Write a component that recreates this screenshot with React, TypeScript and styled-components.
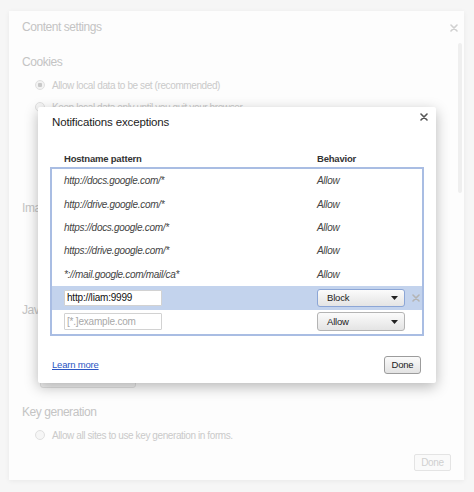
import React from "react"
import styled, { createGlobalStyle } from "styled-components"

const GlobalStyle = createGlobalStyle`
    html, body {
        margin: 0;
        padding: 0;
        background: #f6f6f6;
    }
    body {
        font-family: "Liberation Sans", Arial, sans-serif;
    }
`

// rows with no label sit behind the dialog and only keep the spacing
type Option = { label?: string, checked?: boolean }
type Section = { title: string, options: Option[], button?: boolean }

const sections: Section[] = [
    {
        title: "Cookies",
        options: [
            { label: "Allow local data to be set (recommended)", checked: true },
            { label: "Keep local data only until you quit your browser" },
            {},
            {},
        ],
        button: true,
    },
    { title: "Images", options: [{}, {}], button: true },
    { title: "JavaScript", options: [{}, {}], button: true },
    {
        title: "Key generation",
        options: [{ label: "Allow all sites to use key generation in forms." }],
    },
]

const exceptions = [
    "http://docs.google.com/*",
    "http://drive.google.com/*",
    "https://docs.google.com/*",
    "https://drive.google.com/*",
    "*://mail.google.com/mail/ca*",
]

const Cross = ({ size, color }: { size: number, color: string }) => (
    <svg width={size} height={size} viewBox="0 0 8 8">
        <path d="M1 1 L7 7 M7 1 L1 7" stroke={color} strokeWidth="1.6" strokeLinecap="round" />
    </svg>
)

const Caret = () => (
    <svg width="7" height="4" viewBox="0 0 7 4">
        <path d="M0 0 H7 L3.5 4 Z" fill="#222" />
    </svg>
)

const App = () => {
    return (
        <>
            <GlobalStyle />
            <Page>
                <Panel>
                    <PanelMain>
                        <TitleRow>
                            <BgTitle>Content settings</BgTitle>
                            <BgClose><Cross size={8} color="#d0d0d0" /></BgClose>
                        </TitleRow>
                        {sections.map((s, i) => (
                            <BgSection key={i} $first={i === 0}>
                                <BgHeading>{s.title}</BgHeading>
                                {s.options.map((o, j) => (
                                    <OptionRow key={j}>
                                        {o.label && (
                                            <>
                                                <Radio $checked={!!o.checked} />
                                                <OptionText>{o.label}</OptionText>
                                            </>
                                        )}
                                    </OptionRow>
                                ))}
                                {s.button && (
                                    <BgButtons>
                                        <BgButton />
                                    </BgButtons>
                                )}
                            </BgSection>
                        ))}
                        <BgFooter>
                            <BgDone>Done</BgDone>
                        </BgFooter>
                    </PanelMain>
                    <ScrollTrack>
                        <ScrollThumb />
                    </ScrollTrack>
                </Panel>

                <Dialog>
                    <DialogHeader>
                        <DialogTitle>Notifications exceptions</DialogTitle>
                        <DialogClose><Cross size={8} color="#555" /></DialogClose>
                    </DialogHeader>
                    <ColumnHeader>
                        <span>Hostname pattern</span>
                        <span>Behavior</span>
                    </ColumnHeader>
                    <List>
                        {exceptions.map((e, i) => (
                            <Row key={i} $height={23.4}>
                                <Cell>{e}</Cell>
                                <Cell>Allow</Cell>
                            </Row>
                        ))}
                        <Row $height={24} $selected>
                            <div><PatternInput $height={16} defaultValue="http://liam:9999" /></div>
                            <Select $height={18} $focused>
                                <span>Block</span>
                                <Caret />
                            </Select>
                            <Remove><Cross size={8} color="#b4b4b4" /></Remove>
                        </Row>
                        <Row $height={24}>
                            <div><PatternInput $height={17} placeholder="[*.]example.com" /></div>
                            <Select $height={19}>
                                <span>Allow</span>
                                <Caret />
                            </Select>
                        </Row>
                    </List>
                    <DialogFooter>
                        <LearnMore href="#">Learn more</LearnMore>
                        <DoneButton>Done</DoneButton>
                    </DialogFooter>
                </Dialog>
            </Page>
        </>
    )
}

export default App

const Page = styled.div`
    position: relative;
    width: 474px;
    height: 492px;
    box-sizing: border-box;
    padding: 11px 0 0 9px;
    overflow: hidden;
`

const Panel = styled.div`
    width: 455px;
    height: 469px;
    background: #fdfdfd;
    box-shadow: 0 1px 5px rgba(0, 0, 0, 0.06);
    display: flex;
`

const PanelMain = styled.div`
    flex: 1;
    display: flex;
    flex-direction: column;
    padding: 7px 0 0 13px;
`

const TitleRow = styled.div`
    display: flex;
    justify-content: space-between;
    align-items: flex-start;
`

const BgTitle = styled.div`
    font-size: 12px;
    letter-spacing: -0.45px;
    line-height: 18px;
    color: #c4c4c4;
`

const BgClose = styled.div`
    display: flex;
    margin-top: 6px;
`

const BgSection = styled.div<{ $first: boolean }>`
    margin-top: ${p => p.$first ? 17 : 15}px;
`

const BgHeading = styled.div`
    font-size: 12px;
    letter-spacing: -0.45px;
    line-height: 18px;
    color: #c4c4c4;
    margin-bottom: 3px;
`

const OptionRow = styled.div`
    height: 22px;
    display: flex;
    align-items: center;
    gap: 7px;
    padding-left: 13px;
`

const Radio = styled.div<{ $checked: boolean }>`
    width: 10px;
    height: 10px;
    box-sizing: border-box;
    border: 1px solid #e0e0e0;
    border-radius: 50%;
    background: ${p => p.$checked ? "radial-gradient(circle, #c8c8c8 0 2px, #f2f2f2 2.5px)" : "#f6f6f6"};
`

const OptionText = styled.span`
    font-size: 10px;
    letter-spacing: -0.4px;
    color: #cacaca;
`

const BgButtons = styled.div`
    display: flex;
    margin: 4px 0 0 18px;
`

const BgButton = styled.div`
    width: 96px;
    height: 18px;
    box-sizing: border-box;
    border: 1px solid #e2e2e2;
    border-radius: 3px;
    background: #f4f4f4;
`

const BgFooter = styled.div`
    display: flex;
    justify-content: flex-end;
    margin: 8px 7px 0 0;
`

const BgDone = styled.div`
    width: 37px;
    height: 17px;
    box-sizing: border-box;
    border: 1px solid #e4e4e4;
    border-radius: 2px;
    background: #fafafa;
    font-size: 10px;
    letter-spacing: -0.3px;
    line-height: 15px;
    text-align: center;
    color: #d0d0d0;
`

const ScrollTrack = styled.div`
    width: 4px;
    margin: 32px 2px 0 0;
`

const ScrollThumb = styled.div`
    height: 150px;
    background: #efefef;
    border-radius: 2px;
`

const Dialog = styled.div`
    position: absolute;
    left: 38px;
    top: 107px;
    width: 398px;
    box-sizing: border-box;
    padding: 0 12px 9px;
    background: #fff;
    border-radius: 2px;
    box-shadow: 0 4px 14px rgba(0, 0, 0, 0.28);
`

const DialogHeader = styled.div`
    display: flex;
    justify-content: space-between;
    align-items: flex-start;
    padding-left: 2px;
    margin-top: 7px;
`

const DialogTitle = styled.div`
    font-size: 11.5px;
    letter-spacing: -0.15px;
    line-height: 16px;
    color: #222;
`

const DialogClose = styled.div`
    display: flex;
    margin: -1px -4px 0 0;
`

const ColumnHeader = styled.div`
    display: grid;
    grid-template-columns: 253px 1fr;
    padding-left: 14px;
    margin: 22px 0 1px;
    font-size: 9.5px;
    letter-spacing: -0.2px;
    line-height: 14px;
    font-weight: bold;
    color: #333;
`

const List = styled.div`
    border: 2px solid #a9bde3;
    background: #fff;
`

const Row = styled.div<{ $height: number, $selected?: boolean }>`
    display: grid;
    grid-template-columns: 253px 88px 1fr;
    align-items: center;
    height: ${p => p.$height}px;
    padding-left: 12px;
    background: ${p => p.$selected ? "#c3d3ed" : "transparent"};
`

const Cell = styled.span`
    font-size: 10px;
    letter-spacing: -0.3px;
    font-style: italic;
    color: #444;
`

const PatternInput = styled.input<{ $height: number }>`
    display: block;
    width: 98px;
    height: ${p => p.$height}px;
    box-sizing: border-box;
    border: 1px solid #d2d2d2;
    border-radius: 1px;
    padding: 0 2px;
    font-family: "Liberation Sans", Arial, sans-serif;
    font-size: 10px;
    letter-spacing: -0.2px;
    color: #111;
    outline: none;
    &::placeholder {
        color: #a8a8a8;
    }
`

const Select = styled.div<{ $height: number, $focused?: boolean }>`
    height: ${p => p.$height}px;
    box-sizing: border-box;
    display: flex;
    align-items: center;
    justify-content: space-between;
    padding: 0 6px 0 9px;
    border: 1px solid ${p => p.$focused ? "#8ca6d6" : "#b4b4b4"};
    border-radius: 3px;
    background: linear-gradient(#fbfbfb, #e4e4e4);
    font-size: 9.5px;
    letter-spacing: -0.2px;
    color: #222;
`

const Remove = styled.div`
    display: flex;
    margin-left: 7px;
`

const DialogFooter = styled.div`
    display: flex;
    justify-content: space-between;
    align-items: center;
    margin-top: 20px;
    padding-left: 2px;
`

const LearnMore = styled.a`
    font-size: 9.5px;
    letter-spacing: -0.2px;
    color: #2c57c4;
    text-decoration: underline;
`

const DoneButton = styled.div`
    width: 37px;
    height: 18px;
    box-sizing: border-box;
    margin-right: 3px;
    border: 1px solid #9c9c9c;
    border-radius: 3px;
    background: linear-gradient(#fbfbfb, #e3e3e3);
    font-size: 9.5px;
    letter-spacing: -0.2px;
    line-height: 16px;
    text-align: center;
    color: #222;
`
